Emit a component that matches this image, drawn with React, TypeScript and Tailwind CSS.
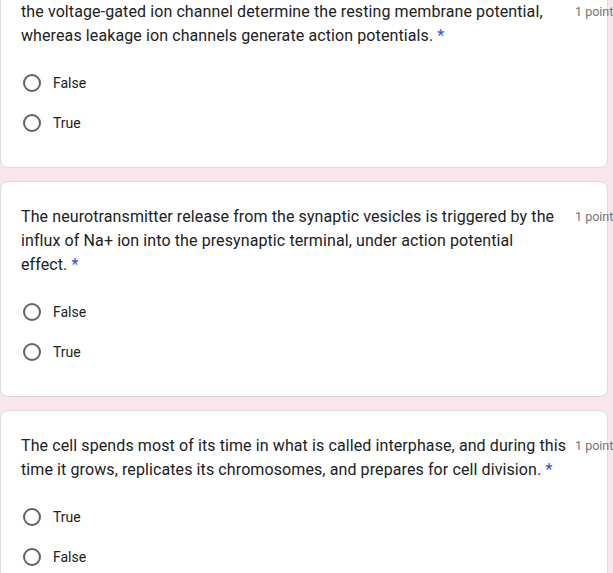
import React from "react";

type Q = { lines: string[]; options: string[] };

const questions: Q[] = [
  {
    lines: [
      "the voltage-gated ion channel determine the resting membrane potential,",
      "whereas leakage ion channels generate action potentials.",
    ],
    options: ["False", "True"],
  },
  {
    lines: [
      "The neurotransmitter release from the synaptic vesicles is triggered by the",
      "influx of Na+ ion into the presynaptic terminal, under action potential",
      "effect.",
    ],
    options: ["False", "True"],
  },
  {
    lines: [
      "The cell spends most of its time in what is called interphase, and during this",
      "time it grows, replicates its chromosomes, and prepares for cell division.",
    ],
    options: ["True", "False"],
  },
];

function Card({ q, first }: { q: Q; first?: boolean }) {
  return (
    <div
      className={
        "w-[608px] shrink-0 bg-white border border-[#dadce0] rounded-lg pl-[20px] pt-[23px] pb-[24px] " +
        (first ? "mt-[-24px]" : "")
      }
    >
      <div className="flex items-start">
        <div className="w-[551px] shrink-0 text-[16px] leading-[24px] text-[#202124] tracking-[0.1px]">
          {q.lines.map((l, i) => (
            <div key={i} className="whitespace-nowrap">
              {l}
              {i === q.lines.length - 1 && <span className="text-[#2a4fd8]"> *</span>}
            </div>
          ))}
        </div>
        <div className="ml-[3px] whitespace-nowrap text-[12.5px] leading-[24px] text-[#70757a]">
          1 point
        </div>
      </div>
      <div className="mt-[15px] flex flex-col">
        {q.options.map((o) => (
          <div key={o} className="h-[40px] flex items-center">
            <div className="ml-[2px] w-[18px] h-[18px] rounded-full border-2 border-[#5f6368]" />
            <span className="ml-[12px] text-[14px] text-[#202124]">{o}</span>
          </div>
        ))}
      </div>
    </div>
  );
}

export default function App() {
  return (
    <div
      className="w-[613px] h-[573px] overflow-hidden bg-[#f8e6ec] flex flex-col gap-[13px]"
      style={{ fontFamily: "Roboto, 'Liberation Sans', Arial, sans-serif" }}
    >
      {questions.map((q, i) => (
        <Card key={i} q={q} first={i === 0} />
      ))}
    </div>
  );
}
